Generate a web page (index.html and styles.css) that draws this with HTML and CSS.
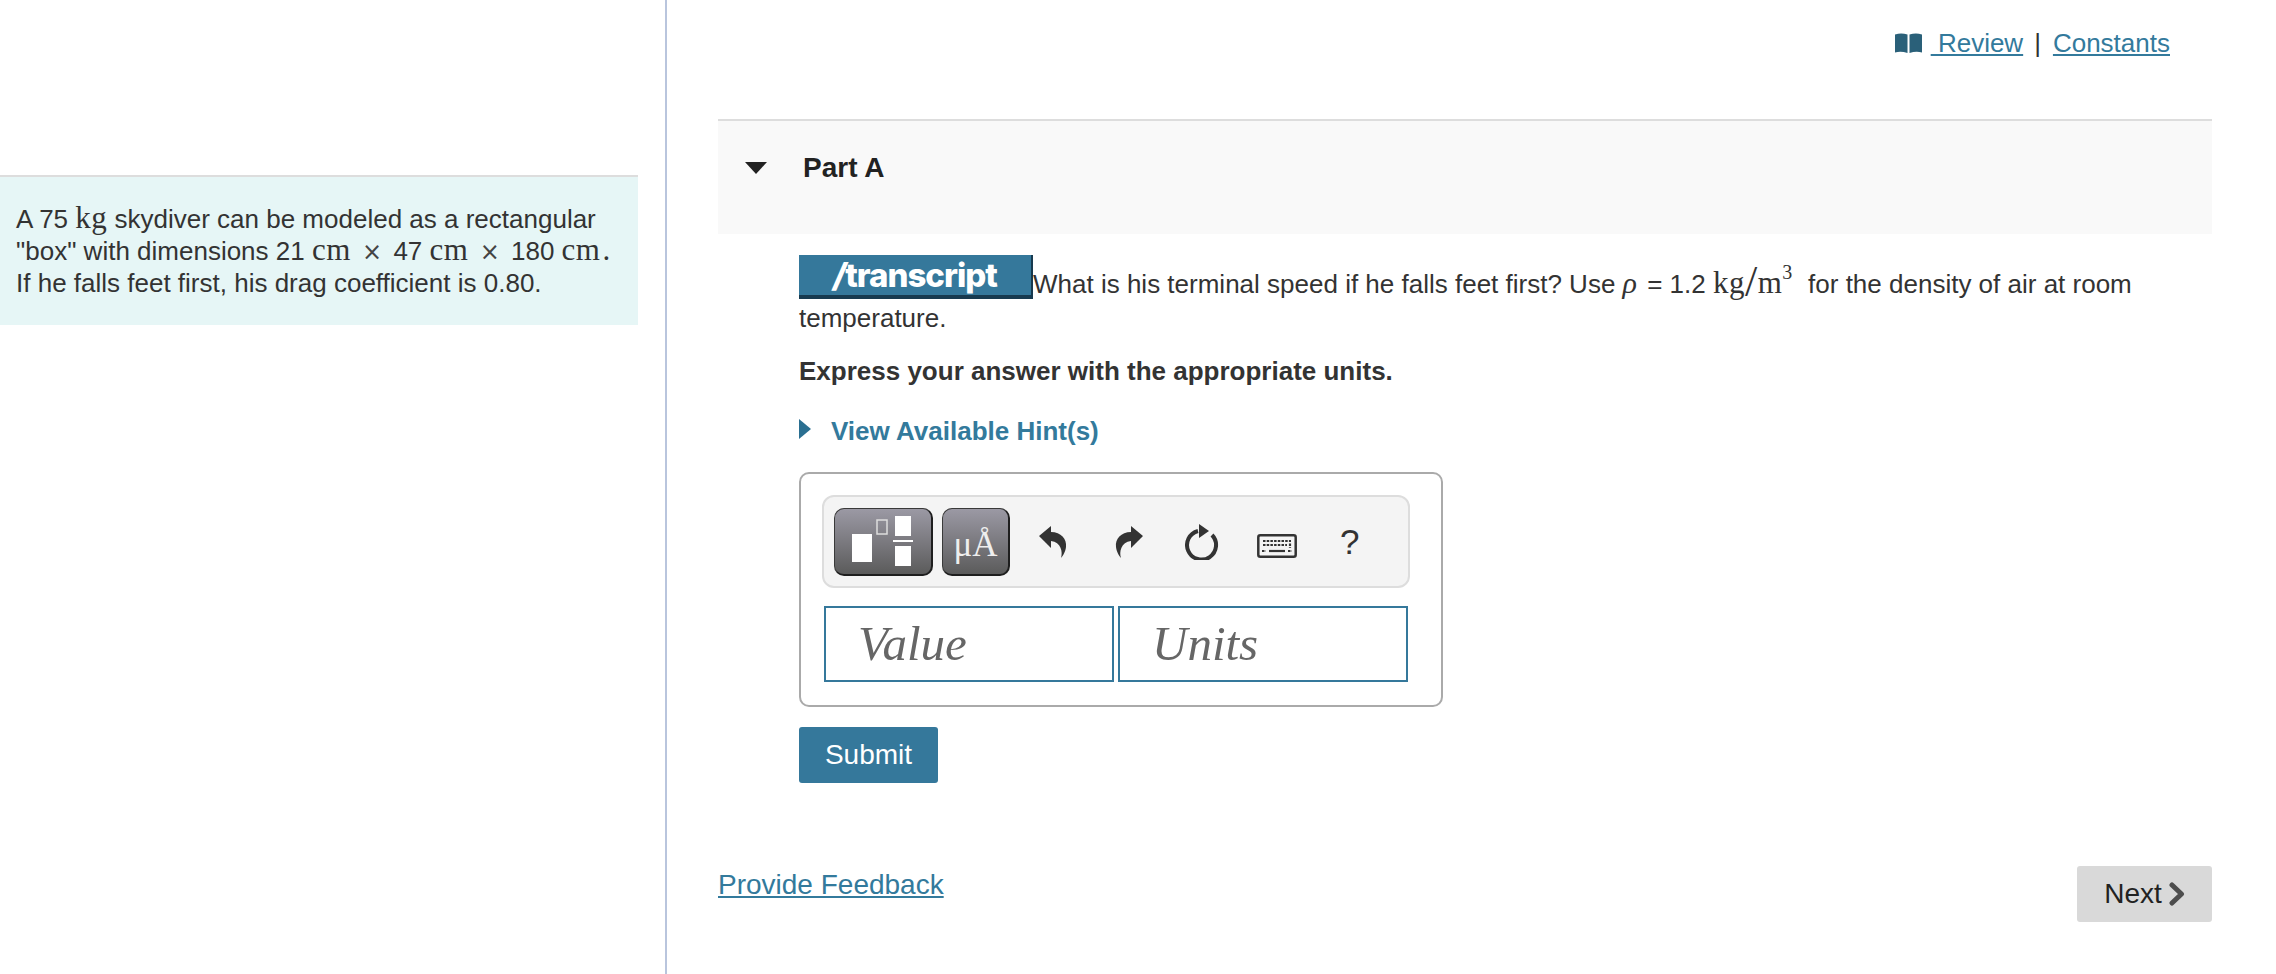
FILE: index.html
```html
<!DOCTYPE html>
<html lang="en">
<head>
  <meta charset="UTF-8">
  <title>Part A</title>
  <link rel="stylesheet" href="styles.css">
</head>
<body>
  <div class="sidebar">
    <div class="intro">
      A 75 <span class="math">kg</span> skydiver can be modeled as a rectangular<br>
      "box" with dimensions 21 <span class="math">cm</span> <span class="times">×</span> 47 <span class="math">cm</span> <span class="times">×</span> 180 <span class="math">cm</span><span class="math dot">.</span><br>
      If he falls feet first, his drag coefficient is 0.80.
    </div>
  </div>

  <div class="content">
    <div class="top-links">
      <svg class="book-icon" width="27" height="20" viewBox="0 0 27 20">
        <path d="M0 1.5 Q6 -0.5 12.5 1.5 V20 Q6 18 0 19.5Z M14.5 1.5 Q21 -0.5 27 1.5 V19.5 Q21 18 14.5 20Z" fill="#2a6079"/>
      </svg>
      <a href="#" class="link">&nbsp;Review</a>
      <span class="sep">|</span>
      <a href="#" class="link">Constants</a>
    </div>

    <div class="part-head">
      <span class="caret-down"></span>
      <span class="part-title">Part A</span>
    </div>

    <div class="part-body">
      <p class="question"><span class="transcript"><span class="slash">/</span>transcript</span>What is his terminal speed if he falls feet first? Use <span class="rho">ρ</span> = 1.2 <span class="math">kg<span class="over">/</span>m<sup>3</sup></span> for the density of air at room temperature.</p>
      <p class="express">Express your answer with the appropriate units.</p>
      <div class="hints">
        <span class="caret-right"></span>
        <span>View Available Hint(s)</span>
      </div>

      <div class="answer-box">
        <div class="toolbar">
          <div class="tool-btn wide">
            <svg width="62" height="50" viewBox="0 0 62 50">
              <rect x="0" y="18" width="20" height="28" fill="#fff"/>
              <rect x="25" y="4" width="10" height="14" fill="none" stroke="#ddd" stroke-width="1.5"/>
              <rect x="43" y="0" width="16" height="20" fill="#fff"/>
              <rect x="41" y="24" width="20" height="2" fill="#fff"/>
              <rect x="43" y="30" width="16" height="20" fill="#fff"/>
            </svg>
          </div>
          <div class="tool-btn unit">μÅ</div>
          <svg class="tool-icon undo" width="28" height="32" viewBox="0 0 28 32">
            <path d="M0 10 L12 0 V6 C22 6 28 13 27 21 C26.600 25 24 30 22 32 C24 26 22 16 12 15 V22Z" fill="#333"/>
          </svg>
          <svg class="tool-icon redo" width="28" height="32" viewBox="0 0 28 32">
            <path d="M28 10 L16 0 V6 C6 6 0 13 1 21 C1.400 25 4 30 6 32 C4 26 6 16 16 15 V22Z" fill="#333"/>
          </svg>
          <svg class="tool-icon reset" width="34" height="36" viewBox="0 0 34 36">
            <path d="M27 11 A14.500 14.500 0 1 1 13 7" fill="none" stroke="#333" stroke-width="4"/>
            <path d="M14 0 L24 7 L14 14Z" fill="#333"/>
          </svg>
          <svg class="tool-icon keyboard" width="40" height="24" viewBox="0 0 40 24">
            <rect x="1.300" y="1.300" width="37.400" height="21.400" rx="2" fill="none" stroke="#333" stroke-width="2.500"/>
            <path d="M6 7 H34 M6 11 H30 M5 17 H9 M12 17 H28 M31 17 H35 M33 9.500 V14" fill="none" stroke="#333" stroke-width="2.200" stroke-dasharray="2.500 1.200"/>
            <path d="M12 17 H28" fill="none" stroke="#333" stroke-width="2.200"/>
          </svg>
          <span class="help">?</span>
        </div>
        <div class="fields">
          <div class="field">Value</div>
          <div class="field">Units</div>
        </div>
      </div>

      <div class="submit">Submit</div>
    </div>

    <div class="bottom-row">
      <a href="#" class="link">Provide Feedback</a>
      <div class="next">Next
        <svg width="16" height="24" viewBox="0 0 16 24">
          <path d="M3 3 L12.500 12 L3 21" fill="none" stroke="#4d4d4d" stroke-width="5" stroke-linecap="round" stroke-linejoin="round"/>
        </svg>
      </div>
    </div>
  </div>
</body>
</html>
```

FILE: styles.css
```css
* {
  margin: 0;
  padding: 0;
  box-sizing: border-box;
}

body {
  display: flex;
  height: 100vh;
  overflow: hidden;
  background: #ffffff;
  color: #333333;
  font-family: "Liberation Sans", Arial, sans-serif;
  font-size: 26px;
}

.link {
  color: #337a9c;
  text-decoration: underline;
}

.math {
  font-family: "Liberation Serif", serif;
  font-size: 31px;
  letter-spacing: 0.5px;
  line-height: 0;
}

.dot {
  margin-left: 2px;
}

.times {
  margin: 0 4px;
  font-family: "DejaVu Sans", sans-serif;
  font-size: 24px;
  line-height: 0;
  color: #444444;
}

.rho {
  margin-right: 3px;
  font-family: "Liberation Serif", serif;
  font-size: 30px;
  font-style: italic;
  line-height: 0;
}

.over {
  font-size: 44px;
  font-weight: normal;
  line-height: 0;
  vertical-align: -3px;
}

sup {
  margin-right: 8px;
  font-size: 20px;
  line-height: 0;
  vertical-align: 14px;
}

.sidebar {
  width: 667px;
  flex: none;
  padding-top: 175px;
  border-right: 2px solid #b9c5dd;
}

.intro {
  width: 638px;
  height: 150px;
  padding: 26px 0 0 16px;
  background: #e6f6f6;
  border-top: 2px solid #dddddd;
  line-height: 32px;
}

.content {
  flex: 1;
  display: flex;
  flex-direction: column;
  padding: 0 64px 0 51px;
}

.top-links {
  height: 119px;
  display: flex;
  justify-content: flex-end;
  align-items: flex-start;
  padding: 26px 42px 0 0;
  line-height: 34px;
}

.book-icon {
  margin: 7px 9px 0 0;
}

.sep {
  margin: 0 12px 0 11px;
}

.part-head {
  height: 115px;
  display: flex;
  align-items: flex-start;
  padding: 31px 0 0 27px;
  background: #f9f9f9;
  border-top: 2px solid #dddddd;
}

.caret-down {
  width: 0;
  height: 0;
  margin: 10px 36px 0 0;
  border-left: 11px solid transparent;
  border-right: 11px solid transparent;
  border-top: 12px solid #222222;
}

.part-title {
  font-size: 28px;
  font-weight: bold;
  color: #222222;
}

.part-body {
  padding: 21px 0 0 81px;
}

.question {
  line-height: 34px;
}

.transcript {
  display: inline-block;
  width: 234px;
  height: 44px;
  overflow: hidden;
  vertical-align: -6px;
  background: #35789b;
  border-bottom: 4px solid #173a4f;
  border-right: 2px solid #173a4f;
  color: #ffffff;
  font-family: "Inter", sans-serif;
  font-size: 33px;
  font-weight: 800;
  letter-spacing: -1px;
  line-height: 41px;
  text-align: center;
}

.slash {
  font-style: italic;
}

.express {
  margin-top: 19px;
  font-weight: bold;
  line-height: 34px;
}

.hints {
  display: flex;
  align-items: center;
  margin-top: 26px;
  color: #337a9c;
  font-weight: bold;
  line-height: 34px;
}

.caret-right {
  width: 0;
  height: 0;
  margin: -4px 20px 0 0;
  border-top: 10px solid transparent;
  border-bottom: 10px solid transparent;
  border-left: 12px solid #2a6f91;
}

.answer-box {
  width: 644px;
  height: 235px;
  margin-top: 24px;
  padding: 21px 21px 0;
  border: 2px solid #aaaaaa;
  border-radius: 10px;
}

.toolbar {
  width: 588px;
  height: 93px;
  display: flex;
  align-items: center;
  padding-left: 10px;
  background: #f4f4f4;
  border: 2px solid #dddddd;
  border-radius: 12px;
}

.tool-btn {
  height: 68px;
  display: flex;
  align-items: center;
  justify-content: center;
  background: linear-gradient(#9b99a4, #5b5b5b);
  border: 1px solid #3a3a3a;
  border-bottom: 2px solid #1e1e1e;
  border-right: 2px solid #1e1e1e;
  border-radius: 10px;
}

.wide {
  width: 99px;
  margin-right: 9px;
}

.unit {
  width: 68px;
  margin-right: 29px;
  padding-top: 8px;
  color: #eeeeee;
  font-family: "Liberation Serif", serif;
  font-size: 35px;
}

.undo {
  margin-right: 48px;
}

.redo {
  margin-right: 42px;
}

.reset {
  margin-right: 38px;
}

.keyboard {
  margin: 8px 43px 0 0;
}

.help {
  font-size: 35px;
  color: #333333;
}

.fields {
  display: flex;
  gap: 4px;
  margin: 18px 0 0 2px;
}

.field {
  width: 290px;
  height: 76px;
  padding-left: 32px;
  border: 2px solid #35789b;
  color: #666666;
  font-family: "Liberation Serif", serif;
  font-size: 49px;
  font-style: italic;
  line-height: 72px;
}

.submit {
  width: 139px;
  height: 56px;
  margin-top: 20px;
  background: #35789b;
  border-radius: 3px;
  color: #ffffff;
  font-size: 28px;
  line-height: 56px;
  text-align: center;
}

.bottom-row {
  display: flex;
  justify-content: space-between;
  align-items: flex-start;
  margin-top: 83px;
}

.bottom-row .link {
  margin-top: 3px;
  font-size: 28px;
}

.next {
  width: 135px;
  height: 56px;
  display: flex;
  align-items: center;
  justify-content: center;
  gap: 7px;
  background: #d9d9d9;
  border-radius: 3px;
  color: #222222;
  font-size: 28px;
}
```
